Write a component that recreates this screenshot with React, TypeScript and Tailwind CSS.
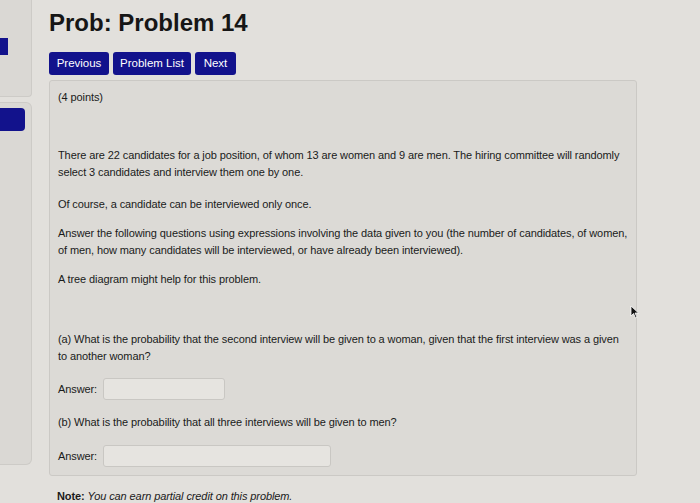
import React from "react";

const btn =
  "h-[23px] rounded-[3px] bg-[#12128c] text-white text-[11.5px] leading-[23px] text-center";

function Cursor() {
  return (
    <svg className="absolute left-[630px] top-[305px]" width="10" height="14" viewBox="0 0 10 14">
      <path d="M1 1 L1 11 L3.5 8.5 L5.5 13 L7 12.3 L5 8 L8.5 8 Z" fill="#111" stroke="#fff" strokeWidth="0.8" />
    </svg>
  );
}

export default function App() {
  return (
    <div className="relative flex w-[700px] h-[503px] overflow-hidden bg-[#e2e0dc] text-[#1a1a1a] font-['Liberation_Sans',Arial,sans-serif]">
      {/* left sidebar panels */}
      <aside className="w-[32px] shrink-0 flex flex-col gap-[5px]">
        <div className="h-[97px] pt-[38px] bg-[#dad8d4] border-r border-b border-[#cdcbc7] rounded-br-[4px]">
          <div className="w-[8px] h-[17px] bg-[#12128c]" />
        </div>
        <div className="h-[363px] pt-[5px] bg-[#dad8d4] border-r border-y border-[#cdcbc7] rounded-r-[6px]">
          <div className="w-[25px] h-[23px] bg-[#12128c] rounded-r-[4px]" />
        </div>
      </aside>

      <main className="ml-[17px] w-[588px] shrink-0">
        <h1 className="pt-[9px] text-[24px] leading-[28px] font-bold text-[#161616]">Prob: Problem 14</h1>

        <div className="mt-[15px] flex gap-[4px]">
          <button className={`${btn} w-[60px]`}>Previous</button>
          <button className={`${btn} w-[78px]`}>Problem List</button>
          <button className={`${btn} w-[41px]`}>Next</button>
        </div>

        <section className="mt-[5px] h-[396px] px-[8px] pt-[8px] bg-[#dcdad6] border border-[#cbc9c5] rounded-[3px] text-[11px] leading-[17px] tracking-[-0.1px]">
          <p>(4 points)</p>

          <p className="mt-[41px]">
            There are 22 candidates for a job position, of whom 13 are women and 9 are men. The hiring committee will randomly select 3 candidates and interview them one by one.
          </p>
          <p className="mt-[15px]">Of course, a candidate can be interviewed only once.</p>
          <p className="mt-[12px]">
            Answer the following questions using expressions involving the data given to you (the number of candidates, of women, of men, how many candidates will be interviewed, or have already been interviewed).
          </p>
          <p className="mt-[12px]">A tree diagram might help for this problem.</p>

          <p className="mt-[43px]">
            (a) What is the probability that the second interview will be given to a woman, given that the first interview was a given to another woman?
          </p>
          <div className="mt-[13px] flex items-center gap-[5px]">
            <span className="w-[40px]">Answer:</span>
            <div className="w-[122px] h-[22px] bg-[#e6e4e0] border border-[#c9c7c3] rounded-[3px]" />
          </div>

          <p className="mt-[14px]">(b) What is the probability that all three interviews will be given to men?</p>
          <div className="mt-[14px] flex items-center gap-[5px]">
            <span className="w-[40px]">Answer:</span>
            <div className="w-[228px] h-[22px] bg-[#e6e4e0] border border-[#c9c7c3] rounded-[3px]" />
          </div>
        </section>

        <p className="mt-[12px] pl-[8px] text-[11px] leading-[17px] tracking-[-0.1px]">
          <b>Note:</b> <i>You can earn partial credit on this problem.</i>
        </p>
      </main>

      <Cursor />
    </div>
  );
}
